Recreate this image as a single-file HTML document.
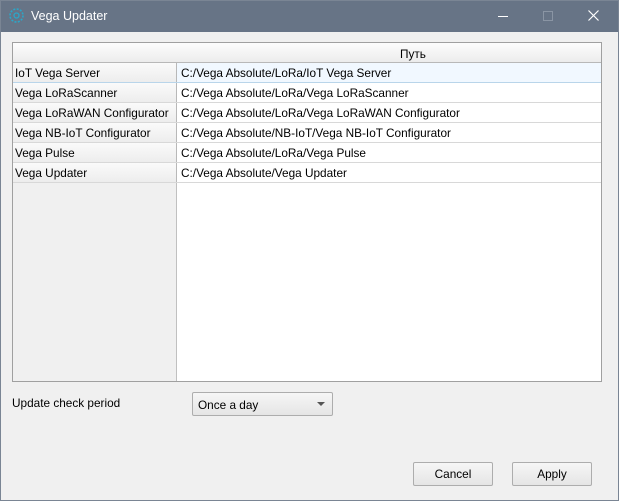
<!DOCTYPE html><html><head><style>
*{margin:0;padding:0;box-sizing:border-box}
body{width:619px;height:501px;background:#f0f0f0;font-family:"Liberation Sans",sans-serif;font-size:11.8px;color:#000;position:relative;overflow:hidden}
.frame{position:absolute;left:0;top:0;width:619px;height:501px;border:1px solid #7a8594;pointer-events:none}
.t{position:absolute;left:0;top:0;width:619px;height:32px;background:#677486;color:#fff}
.a{position:absolute}
.tbl{position:absolute;left:12px;top:42px;width:590px;height:340px;border:1px solid #a0a0a0;background:#fff}
.hdr{position:absolute;left:0;top:0;width:588px;height:20px;background:linear-gradient(#fdfdfd,#ececec);border-bottom:1px solid #b8b8b8}
.vh{position:absolute;left:0;top:20px;width:164px;height:318px;background:#f0f0f0;border-right:1px solid #c0c0c0}
.r{position:absolute;left:0;height:20px;width:588px;border-bottom:1px solid #d8d8d8}
.r .n{position:absolute;left:0;top:0;width:164px;height:19px;background:linear-gradient(#fafafa,#ededed);border-right:1px solid #b8b8b8;padding:3px 0 0 2px}
.r .p{position:absolute;left:165px;top:0;height:19px;padding:3px 0 0 3px}
.btn{position:absolute;top:462px;width:80px;height:24px;border:1px solid #adadad;background:linear-gradient(#f6f6f6,#e5e5e5);border-radius:2px;text-align:center;line-height:22px}
</style></head><body>
<div class="t">
<svg class="a" style="left:8px;top:7px" width="17" height="17" viewBox="0 0 17 17"><circle cx="8.5" cy="8.5" r="6.5" fill="none" stroke="#2aa7c9" stroke-width="1.6" stroke-dasharray="2 1.4"/><circle cx="8.5" cy="8.5" r="2.5" fill="none" stroke="#2aa7c9" stroke-width="1.3"/></svg>
<div class="a" style="left:31px;top:9px;font-size:12.5px">Vega Updater</div>
<div class="a" style="left:498px;top:16px;width:10px;height:1px;background:#fff"></div>
<div class="a" style="left:543px;top:11px;width:10px;height:10px;border:1px solid #8a95a4"></div>
<svg class="a" style="left:588px;top:10px" width="11" height="11"><path d="M0.5 0.5L10.5 10.5M10.5 0.5L0.5 10.5" stroke="#fff" stroke-width="1.2"/></svg>
</div>
<div class="tbl">
<div class="hdr"><span class="a" style="left:387px;top:4px">Путь</span></div>
<div class="vh"></div>
<div class="r" style="top:20px;background:#f1f8ff;border-bottom:1px solid #b9d5ea"><div class="n">IoT Vega Server</div><div class="p">C:/Vega Absolute/LoRa/IoT Vega Server</div></div>
<div class="r" style="top:40px"><div class="n">Vega LoRaScanner</div><div class="p">C:/Vega Absolute/LoRa/Vega LoRaScanner</div></div>
<div class="r" style="top:60px"><div class="n">Vega LoRaWAN Configurator</div><div class="p">C:/Vega Absolute/LoRa/Vega LoRaWAN Configurator</div></div>
<div class="r" style="top:80px"><div class="n">Vega NB-IoT Configurator</div><div class="p">C:/Vega Absolute/NB-IoT/Vega NB-IoT Configurator</div></div>
<div class="r" style="top:100px"><div class="n">Vega Pulse</div><div class="p">C:/Vega Absolute/LoRa/Vega Pulse</div></div>
<div class="r" style="top:120px"><div class="n">Vega Updater</div><div class="p">C:/Vega Absolute/Vega Updater</div></div>
</div>
<div class="a" style="left:12px;top:396px">Update check period</div>
<div class="a" style="left:192px;top:392px;width:141px;height:24px;border:1px solid #adadad;border-radius:2px;background:linear-gradient(#f6f6f6,#e5e5e5);padding:5px 0 0 5px">Once a day
<svg class="a" style="left:124px;top:9px" width="8" height="5"><path d="M0 0H8L4 4Z" fill="#555"/></svg></div>
<div class="btn" style="left:413px">Cancel</div>
<div class="btn" style="left:512px">Apply</div>
<div class="frame"></div>
</body></html>
